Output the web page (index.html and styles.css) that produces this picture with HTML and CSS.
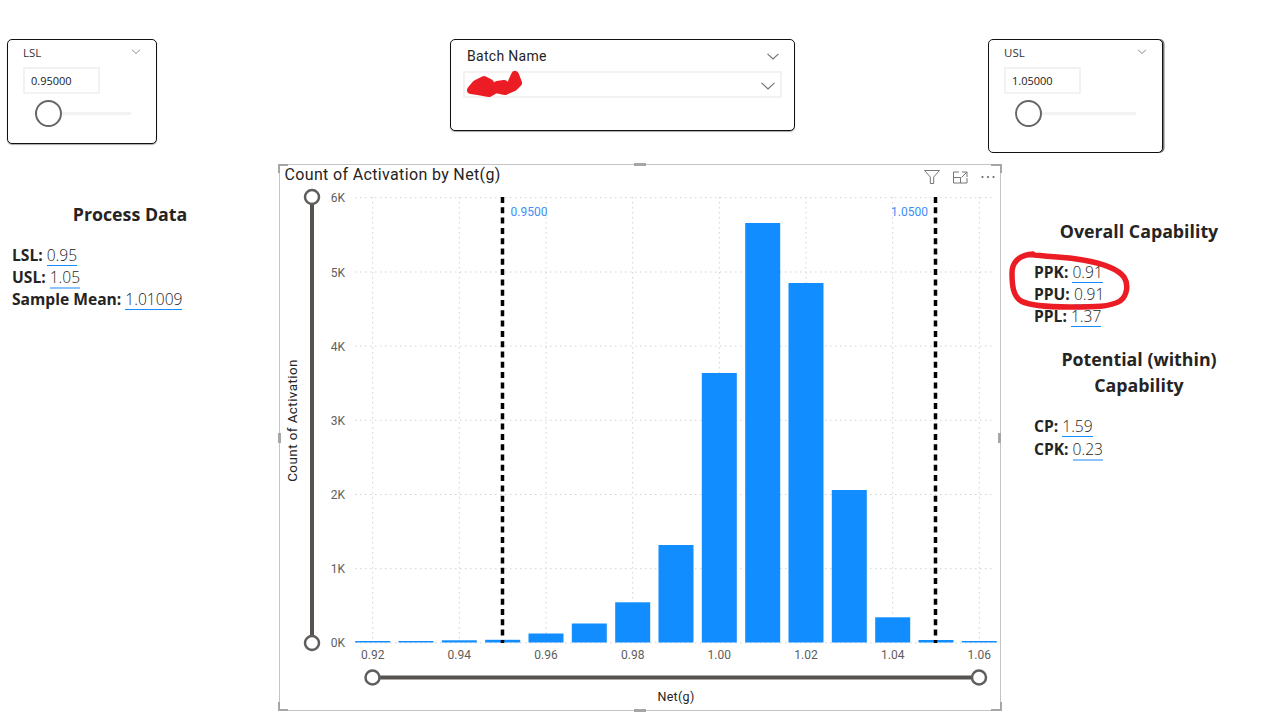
FILE: index.html
```html
<!DOCTYPE html>
<html lang="en">
<head>
<meta charset="utf-8">
<title>Process Capability Report</title>
<link rel="stylesheet" href="styles.css">
</head>
<body>
<main class="report">
  <section class="slicers">
    <div class="slicer slicer-lsl">
      <div class="slicer-head"><span class="slicer-title">LSL</span>
        <svg class="chev" width="10" height="6" viewBox="0 0 10 6"><path d="M1 .8 5 4.500 9 .8"/></svg></div>
      <div class="num-box">0.95000</div>
      <div class="range"><span class="knob"></span><span class="track"></span></div>
    </div>
    <div class="slicer slicer-batch">
      <div class="batch-head"><span class="batch-title">Batch Name</span>
        <svg class="chev" width="12" height="7" viewBox="0 0 12 7"><path d="M.5.8 6 6 11.500.8"/></svg></div>
      <div class="batch-select">
        <svg class="chev" width="14" height="8" viewBox="0 0 14 8"><path d="M.5.8 7 7 13.500.8"/></svg>
      </div>
    </div>
    <div class="slicer slicer-usl">
      <div class="slicer-head"><span class="slicer-title">USL</span>
        <svg class="chev" width="10" height="6" viewBox="0 0 10 6"><path d="M1 .8 5 4.500 9 .8"/></svg></div>
      <div class="num-box">1.05000</div>
      <div class="range"><span class="knob"></span><span class="track"></span></div>
    </div>
  </section>

  <section class="body-row">
    <aside class="col-left">
      <h2 class="heading heading-process">Process Data</h2>
      <ul class="stats">
        <li><b>LSL:</b> <span class="val">0.95</span></li>
        <li><b>USL:</b> <span class="val soft">1.05</span></li>
        <li><b>Sample Mean:</b> <span class="val">1.01009</span></li>
      </ul>
    </aside>

    <figure class="chart">
      <svg class="chart-svg" width="723" height="548" viewBox="279 164 723 548">
        <rect class="frame" x="279.500" y="164.500" width="721" height="546"/>
        <path class="frame-mark" d="M278 173v-9h10v2h-8v7zM991 164h11v9h-2v-7h-9zM278 702h2v7h8v2h-10zM1002 702v9h-11v-2h9v-7zM634 163h12v3h-12zM634 709h12v3h-12zM278 433h3v10h-3zM998 433h3v10h-3z"/>
        <text class="chart-title" x="284.500" y="179.500">Count of Activation by Net(g)</text>

        <g class="tool">
          <path d="M924.500 170.500h15l-5.800 6.500v6.500h-3.400V177z"/>
          <path d="M959 172h-5.500v11h13.500v-5M953.500 177.500h7v5.500M962 172h5v5M967 172l-5.500 5.500"/>
        </g>
        <g class="dots"><circle cx="982.500" cy="177" r="1.100"/><circle cx="988" cy="177" r="1.100"/><circle cx="993.500" cy="177" r="1.100"/></g>

        <g class="grid">
          <path d="M355 197.700H995M355 272H995M355 346.100H995M355 420.300H995M355 494.500H995M355 568.700H995M355 642.800H995"/>
          <path d="M372.700 197V642M459.300 197V642M546 197V642M632.700 197V642M719.300 197V642M806 197V642M892.700 197V642M979.300 197V642"/>
        </g>

        <g class="y-labels">
          <text x="345" y="202">6K</text><text x="345" y="276.500">5K</text><text x="345" y="350.500">4K</text>
          <text x="345" y="425">3K</text><text x="345" y="499">2K</text><text x="345" y="573">1K</text><text x="345" y="647">0K</text>
        </g>

        <g class="bars">
          <rect x="355.200" y="641" width="35" height="1.500"/>
          <rect x="398.500" y="641" width="35" height="1.500"/>
          <rect x="441.800" y="640.300" width="35" height="2.200"/>
          <rect x="485.200" y="639.800" width="35" height="2.700"/>
          <rect x="528.500" y="633.500" width="35" height="9"/>
          <rect x="571.800" y="623.500" width="35" height="19"/>
          <rect x="615.200" y="602.300" width="35" height="40.200"/>
          <rect x="658.500" y="545" width="35" height="97.500"/>
          <rect x="701.800" y="373" width="35" height="269.500"/>
          <rect x="745.200" y="223" width="35" height="419.500"/>
          <rect x="788.500" y="283" width="35" height="359.500"/>
          <rect x="831.800" y="490" width="35" height="152.500"/>
          <rect x="875.200" y="617.300" width="35" height="25.200"/>
          <rect x="918.500" y="640" width="35" height="2.500"/>
          <rect x="961.800" y="641" width="35" height="1.500"/>
        </g>

        <path class="ref-line" d="M502.500 197V643M935.500 197V643"/>
        <text class="ref-label" x="510.500" y="216">0.9500</text>
        <text class="ref-label" x="891" y="216">1.0500</text>

        <g class="x-labels">
          <text x="372.700" y="658.500">0.92</text><text x="459.300" y="658.500">0.94</text><text x="546" y="658.500">0.96</text>
          <text x="632.700" y="658.500">0.98</text><text x="719.300" y="658.500">1.00</text><text x="806" y="658.500">1.02</text>
          <text x="892.700" y="658.500">1.04</text><text x="979.300" y="658.500">1.06</text>
        </g>

        <text class="axis-title" x="676" y="701">Net(g)</text>
        <text class="axis-title axis-title-y" transform="translate(296.500 420.500) rotate(-90)">Count of Activation</text>

        <path class="zoom-line" d="M312 197V643M372.500 677.500H979"/>
        <g class="zoom-knob">
          <circle cx="312" cy="197" r="7"/><circle cx="312" cy="643" r="7"/>
          <circle cx="372.500" cy="677.500" r="7"/><circle cx="979" cy="677.500" r="7"/>
        </g>
      </svg>
    </figure>

    <aside class="col-right">
      <h2 class="heading heading-overall">Overall Capability</h2>
      <ul class="stats">
        <li><b>PPK:</b> <span class="val">0.91</span></li>
        <li><b>PPU:</b> <span class="val soft">0.91</span></li>
        <li><b>PPL:</b> <span class="val">1.37</span></li>
      </ul>
      <h2 class="heading heading-potential">Potential (within) Capability</h2>
      <ul class="stats">
        <li><b>CP:</b> <span class="val">1.59</span></li>
        <li><b>CPK:</b> <span class="val soft">0.23</span></li>
      </ul>
    </aside>
  </section>

  <svg class="ink" width="1263" height="721" viewBox="0 0 1263 721" aria-hidden="true">
    <path class="ink-circle" d="M1030 254.500C1050 257 1068 257 1083 260C1100 263 1117 268 1124 277C1129 285 1127 296 1120 301C1110 307 1095 307 1070 307C1050 307 1030 306 1021 301C1013 296 1012 285 1012 273C1012 263 1018 255 1033 254"/>
    <path class="ink-scribble" d="M471 90L476 84L484 80L490 83L488 90L495 87L497 85L504 84L505 88L511 84L515 75L518 83L514 87L505 91L496 89L489 93L478 91Z"/>
  </svg>
</main>
</body>
</html>
```

FILE: styles.css
```css
* { box-sizing: border-box; }
html, body { margin: 0; padding: 0; background: #fff; }
body { width: 1263px; height: 721px; overflow: hidden; font-family: "Open Sans", "Noto Sans", sans-serif; color: #252423; }
.report { position: relative; width: 1263px; height: 721px; }

/* top slicers */
.slicers { display: flex; align-items: flex-start; padding: 39px 0 0 7px; height: 153px; }
.slicer { border: 1px solid #111; border-radius: 5px; background: #fff; box-shadow: 0 1px 1px #aaa; }
.slicer-lsl { width: 150px; height: 105px; padding: 6px 0 0 15px; }
.slicer-batch { width: 345px; height: 92px; margin-left: 293px; padding: 0 12px; }
.slicer-usl { width: 175px; height: 114px; margin-left: 193px; padding: 6px 0 0 15px; box-shadow: 1.500px 0 0 #777; }
.slicer-head { display: flex; align-items: center; justify-content: space-between; height: 13px; padding-right: 15px; }
.slicer-title { font-size: 11.500px; line-height: 13px; color: #333; }
.chev { display: block; fill: none; stroke: #6a7078; stroke-width: 1.100; }
.slicer-head .chev { margin-top: -1px; stroke: #8a8f96; stroke-width: 1; }
.num-box { width: 77px; height: 27px; margin-top: 8px; border: 2px solid #f3f2f1; padding-left: 6px; font-size: 11px; line-height: 23px; color: #1a1a1a; }
.range { display: flex; align-items: center; margin: 6px 0 0 12px; height: 27px; }
.knob { flex: none; width: 27px; height: 27px; border: 2.500px solid #666; border-radius: 50%; background: #fff; }
.track { height: 3px; width: 69px; background: #f3f2f1; }
.slicer-usl .range { margin-left: 11px; }
.slicer-usl .track { width: 94px; }
.batch-head { display: flex; align-items: center; justify-content: space-between; height: 31px; padding: 1px 3px 0 4px; }
.batch-title { font-family: Roboto, "Open Sans", sans-serif; font-size: 14px; letter-spacing: .3px; color: #252423; }
.batch-select { display: flex; align-items: center; justify-content: flex-end; width: 319px; height: 27px; border: 2px solid #f3f2f1; padding-right: 5px; }
.batch-select .chev { margin-top: 2px; }

/* main row */
.body-row { display: flex; align-items: flex-start; margin-top: 10.500px; }
.col-left { flex: none; width: 279px; padding: 0 0 0 12px; }
.col-right { flex: none; width: 261px; padding: 0 0 0 32px; }
.chart { flex: none; width: 723px; height: 548px; margin: 0; }
.chart-svg { display: block; overflow: visible; }

.heading { margin: 0; width: 210px; text-align: center; font-size: 17.800px; line-height: 26px; font-weight: 700; color: #252423; }
.heading-process { width: 236px; margin-top: 37px; }
.heading-overall { margin-top: 54px; }
.heading-potential { margin-top: 19px; }
.stats { list-style: none; margin: 17px 0 0; padding: 0; font-size: 15.600px; color: #252423; }
.stats li { height: 22.300px; line-height: 22.300px; white-space: nowrap; }
.stats b { font-weight: 700; }
.val { display: inline-block; line-height: 20px; border-bottom: 1.500px solid #118dff; font-weight: 300; color: #252423; }
.val.soft { border-bottom: 2px solid #8ac4fb; }

/* chart */
.frame { fill: #fff; stroke: #c4c4c4; stroke-width: 1; }
.frame-mark { fill: #a6a6a6; }
.chart-title { font-family: Roboto, sans-serif; font-size: 16px; letter-spacing: .35px; fill: #252423; }
.tool { fill: none; stroke: #777; stroke-width: 1; }
.dots { fill: #666; }
.grid { fill: none; stroke: #d2d2d2; stroke-width: 1; stroke-dasharray: 1.500 3.500; }
.y-labels text { font-family: Roboto, sans-serif; font-size: 12px; fill: #605e5c; text-anchor: end; }
.x-labels text { font-family: Roboto, sans-serif; font-size: 12px; fill: #605e5c; text-anchor: middle; }
.bars rect { fill: #118dff; }
.ref-line { fill: none; stroke: #000; stroke-width: 3.500; stroke-dasharray: 6 4.300; }
.ref-label { font-family: Roboto, sans-serif; font-size: 12px; fill: #3e8ef7; }
.axis-title { font-family: Roboto, sans-serif; font-size: 12.500px; letter-spacing: .3px; fill: #252423; text-anchor: middle; }
.axis-title-y { font-size: 13.500px; letter-spacing: .4px; }
.zoom-line { fill: none; stroke: #555250; stroke-width: 4; }
.zoom-knob circle { fill: #fff; stroke: #605e5c; stroke-width: 2.500; }

/* hand-drawn ink */
.ink { position: absolute; left: 0; top: 0; pointer-events: none; }
.ink-circle { fill: none; stroke: #ec1c24; stroke-width: 5.500; stroke-linecap: round; stroke-linejoin: round; }
.ink-scribble { fill: #ec1c24; stroke: #ec1c24; stroke-width: 8; stroke-linejoin: round; stroke-linecap: round; }
```
